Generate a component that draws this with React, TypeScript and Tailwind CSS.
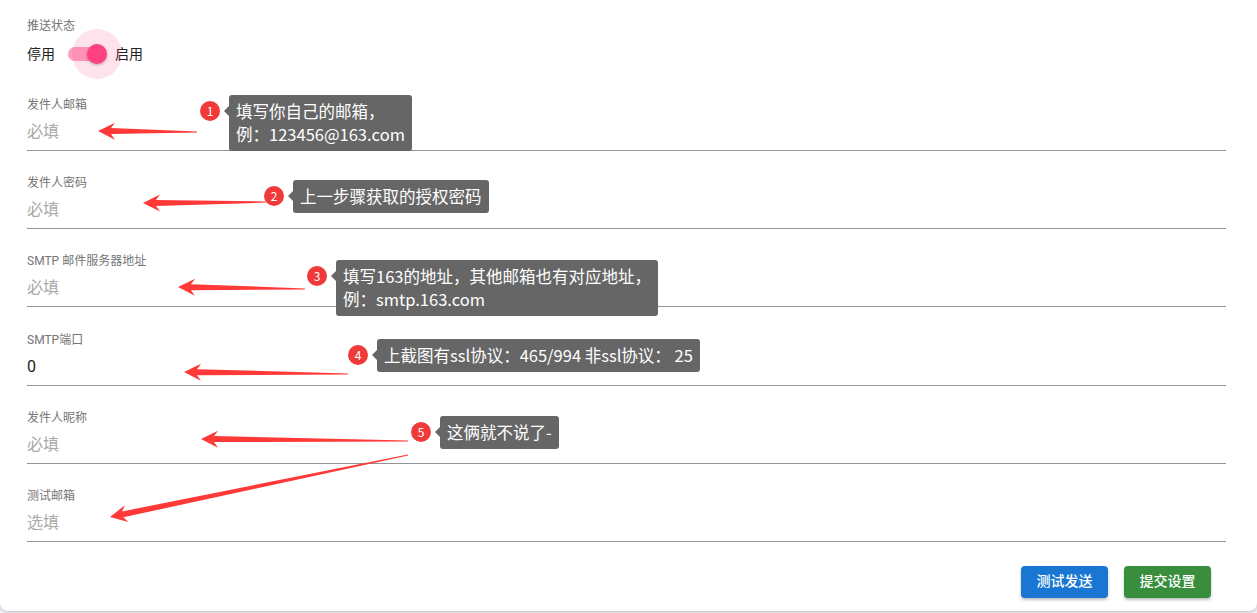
import React from "react";

const FONT = { fontFamily: 'Roboto, "Noto Sans CJK SC", sans-serif' };
const CALLOUT_FONT = { fontFamily: '"Noto Sans CJK SC", "Open Sans", sans-serif' };

type Field = { label: string; placeholder?: string; value?: string };

const fields: Field[] = [
  { label: "发件人邮箱", placeholder: "必填" },
  { label: "发件人密码", placeholder: "必填" },
  { label: "SMTP 邮件服务器地址", placeholder: "必填" },
  { label: "SMTP端口", value: "0" },
  { label: "发件人昵称", placeholder: "必填" },
  { label: "测试邮箱", placeholder: "选填" },
];

type Callout = { n: number; left: number; top: number; lines: string[] };

const callouts: Callout[] = [
  { n: 1, left: 229, top: 95, lines: ["填写你自己的邮箱，", "例：123456@163.com"] },
  { n: 2, left: 293, top: 180, lines: ["上一步骤获取的授权密码"] },
  { n: 3, left: 336, top: 260, lines: ["填写163的地址，其他邮箱也有对应地址，", "例：smtp.163.com"] },
  { n: 4, left: 377, top: 339, lines: ["上截图有ssl协议：465/994 非ssl协议： 25"] },
  { n: 5, left: 440, top: 416, lines: ["这俩就不说了-"] },
];

const arrows: [number, number, number, number][] = [
  [197, 132, 98, 131],
  [266, 202, 143, 203],
  [305, 289, 178, 287],
  [348, 374, 184, 372],
  [408, 441, 201, 439],
  [408, 455, 110, 517],
];

function arrowPoints(x1: number, y1: number, x2: number, y2: number) {
  const dx = x2 - x1;
  const dy = y2 - y1;
  const L = Math.hypot(dx, dy);
  const ux = dx / L;
  const uy = dy / L;
  const nx = -uy;
  const ny = ux;
  const p = (bx: number, by: number, back: number, side: number) =>
    `${(bx - ux * back + nx * side).toFixed(1)},${(by - uy * back + ny * side).toFixed(1)}`;
  return [
    `${x2},${y2}`,
    p(x2, y2, 17, 8.5),
    p(x2, y2, 13, 3),
    p(x1, y1, 0, 0.6),
    p(x1, y1, 0, -0.6),
    p(x2, y2, 13, -3),
    p(x2, y2, 17, -8.5),
  ].join(" ");
}

function FieldRow({ f }: { f: Field }) {
  return (
    <div className="flex flex-col">
      <div className="text-[12px] leading-[16px] text-[#757575]">{f.label}</div>
      <div className="mt-[7px] border-b border-[#949494] pb-[6px]">
        <input
          readOnly
          value={f.value ?? ""}
          placeholder={f.placeholder}
          className="block h-[24px] w-full bg-transparent text-[16px] leading-[24px] text-[#212121] outline-none placeholder:text-[#a9a9a9]"
          style={FONT}
        />
      </div>
    </div>
  );
}

function CalloutBox({ c }: { c: Callout }) {
  return (
    <div className="absolute" style={{ left: c.left, top: c.top }}>
      <div
        className="absolute flex h-[20px] w-[20px] items-center justify-center rounded-full bg-[#f03a3a] text-[12px] leading-none text-white"
        style={{ left: -29, top: 6, ...CALLOUT_FONT }}
      >
        {c.n}
      </div>
      <div
        className="absolute h-0 w-0 border-y-[5px] border-r-[5px] border-y-transparent border-r-[#666666]"
        style={{ left: -5, top: 11 }}
      />
      <div
        className="w-max rounded-[3px] bg-[#666666] px-[7px] py-[5px] text-[16.5px] leading-[23px] text-white"
        style={CALLOUT_FONT}
      >
        {c.lines.map((l, i) => (
          <div key={i} className="whitespace-pre">
            {l}
          </div>
        ))}
      </div>
    </div>
  );
}

export default function App() {
  return (
    <div className="h-[613px] w-[1257px] overflow-hidden bg-[#eef0f3]" style={FONT}>
      <div className="relative h-[611px] w-full rounded-b-[8px] bg-white pl-[27px] pr-[31px] pt-[18px] shadow-[0_1px_3px_rgba(0,0,0,0.2)]">
        <div className="text-[12px] leading-[16px] text-[#757575]">推送状态</div>
        <div className="mt-[1px] flex h-[38px] items-center text-[14px] text-[#212121]">
          <span>停用</span>
          <div className="relative ml-[1px] h-[38px] w-[59px]">
            <div className="absolute left-[12px] top-[12px] h-[14px] w-[34px] rounded-full bg-[#ff9fc0]" />
            <div className="absolute left-[16px] top-[-6px] h-[50px] w-[50px] rounded-full bg-[#ff4081]/15" />
            <div className="absolute left-[31px] top-[9px] h-[20px] w-[20px] rounded-full bg-[#ff4081] shadow-[0_1px_3px_rgba(0,0,0,0.3)]" />
          </div>
          <span>启用</span>
        </div>
        <div className="mt-[24px] flex flex-col gap-[24.2px]">
          {fields.map((f) => (
            <FieldRow key={f.label} f={f} />
          ))}
        </div>
        <div className="mt-[24px] flex justify-end gap-[16px] pr-[15px]">
          <button className="h-[32px] w-[87px] rounded-[4px] bg-[#1976d2] text-[14px] font-medium text-white shadow-[0_2px_3px_rgba(0,0,0,0.25)]">
            测试发送
          </button>
          <button className="h-[32px] w-[87px] rounded-[4px] bg-[#388e3c] text-[14px] font-medium text-white shadow-[0_2px_3px_rgba(0,0,0,0.25)]">
            提交设置
          </button>
        </div>

        <svg className="pointer-events-none absolute left-0 top-0" width={1257} height={611}>
          {arrows.map((a, i) => (
            <polygon key={i} points={arrowPoints(a[0], a[1], a[2], a[3])} fill="#ff3838" />
          ))}
        </svg>
        {callouts.map((c) => (
          <CalloutBox key={c.n} c={c} />
        ))}
      </div>
    </div>
  );
}
